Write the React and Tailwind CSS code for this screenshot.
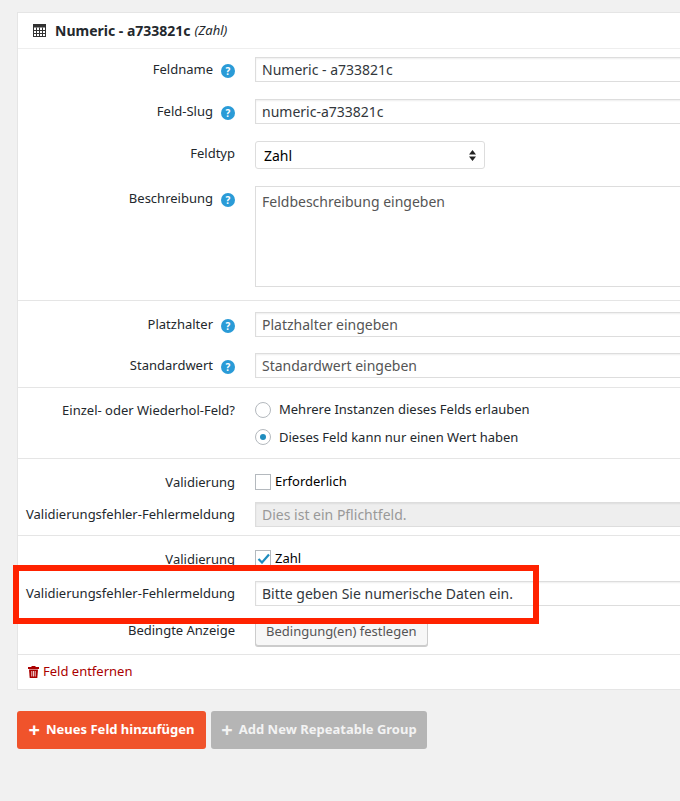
import React from "react";

const Help = () => (
  <span className="inline-flex items-center justify-center w-[14px] h-[14px] rounded-full bg-[#2a9bd7] text-white text-[10px] font-bold ml-[8px] leading-none">?</span>
);

function Row({ label, help, children, className = "" }) {
  return (
    <div className={`flex ${className}`}>
      <div className="w-[217px] shrink-0 text-right text-[13px] text-[#23282d] pt-[3px] flex justify-end items-start">
        <span>{label}</span>
        {help && <span className="mt-[1px]"><Help /></span>}
      </div>
      <div className="ml-[20px] flex-1">{children}</div>
    </div>
  );
}

const inputBase = "w-full h-[25px] border border-[#ddd] px-[6px] text-[14px] shadow-[inset_0_1px_2px_rgba(0,0,0,0.07)] flex items-center";
const inputCls = `${inputBase} bg-white text-[#32373c]`;

export default function App() {
  return (
    <div className="w-[680px] h-[801px] overflow-hidden bg-[#f1f1f1] pt-[12px] font-['Liberation_Sans',Arial,sans-serif]">
      <div className="ml-[17px] w-[720px] bg-white border border-[#e5e5e5]">
        <div className="h-[36px] flex items-center px-[15px] border-b border-[#eee] text-[14px] text-[#23282d]">
          <svg width="13" height="13" viewBox="0 0 13 13" className="mr-[9px]">
            <rect x="0.5" y="0.5" width="12" height="12" fill="none" stroke="#333" />
            <rect x="0.5" y="0.5" width="12" height="3" fill="#333" />
            <path d="M0.5 6.5H12.5M0.5 9.5H12.5M3.5 3.5V12.5M6.5 3.5V12.5M9.5 3.5V12.5" stroke="#333" />
          </svg>
          <span className="font-bold">Numeric - a733821c</span>
          <span className="italic ml-[4px] text-[13px]">(Zahl)</span>
        </div>

        <div className="pt-[8px] pb-[13px] flex flex-col gap-[17px] border-b border-[#e5e5e5]">
          <Row label="Feldname" help><div className={inputCls}>Numeric - a733821c</div></Row>
          <Row label="Feld-Slug" help><div className={inputCls}>numeric-a733821c</div></Row>
          <Row label="Feldtyp">
            <div className="w-[230px] h-[28px] border border-[#ddd] rounded-[3px] bg-white px-[8px] text-[14px] flex items-center justify-between">
              <span>Zahl</span>
              <svg width="7" height="11" viewBox="0 0 7 11"><path d="M0 4.5L3.5 0L7 4.5ZM0 6.5L3.5 11L7 6.5Z" fill="#222" /></svg>
            </div>
          </Row>
          <Row label="Beschreibung" help>
            <div className="w-full h-[101px] border border-[#ddd] px-[6px] pt-[4px] text-[14px] text-[#555]">Feldbeschreibung eingeben</div>
          </Row>
        </div>

        <div className="pt-[11px] pb-[9px] flex flex-col gap-[16px] border-b border-[#e5e5e5]">
          <Row label="Platzhalter" help><div className={`${inputBase} bg-white text-[#555]`}>Platzhalter eingeben</div></Row>
          <Row label="Standardwert" help><div className={`${inputBase} bg-white text-[#555]`}>Standardwert eingeben</div></Row>
        </div>

        <div className="pt-[10px] pb-[11px] border-b border-[#e5e5e5]">
          <Row label="Einzel- oder Wiederhol-Feld?">
            <div className="flex flex-col gap-[8px] text-[13px] text-[#23282d] pt-[2px]">
              <div className="flex items-center gap-[8px]"><span className="w-[16px] h-[16px] rounded-full border border-[#b4b9be] bg-white" />Mehrere Instanzen dieses Felds erlauben</div>
              <div className="flex items-center gap-[8px]"><span className="w-[16px] h-[16px] rounded-full border border-[#b4b9be] bg-white flex items-center justify-center"><span className="w-[6px] h-[6px] rounded-full bg-[#1e8cbe]" /></span>Dieses Feld kann nur einen Wert haben</div>
            </div>
          </Row>
        </div>

        <div className="pt-[11px] pb-[8px] flex flex-col gap-[9px] border-b border-[#e5e5e5]">
          <Row label="Validierung">
            <div className="flex items-center gap-[4px] text-[13px] pt-[2px]"><span className="w-[16px] h-[16px] border border-[#b4b9be]" />Erforderlich</div>
          </Row>
          <Row label="Validierungsfehler-Fehlermeldung">
            <div className={`${inputBase} bg-[#eeeeee] text-[#999]`}>Dies ist ein Pflichtfeld.</div>
          </Row>
        </div>

        <div className="pt-[11px] pb-[8px] flex flex-col gap-[12px] border-b border-[#e5e5e5]">
          <Row label="Validierung">
            <div className="flex items-center gap-[4px] text-[13px] pt-[2px]">
              <span className="w-[16px] h-[16px] border border-[#b4b9be] flex items-center justify-center">
                <svg width="13" height="11" viewBox="0 0 13 11"><path d="M1.5 6L5 9.5L12 1.5" fill="none" stroke="#1e8cbe" strokeWidth="2.2" /></svg>
              </span>Zahl
            </div>
          </Row>
          <div className="relative">
            <Row label="Validierungsfehler-Fehlermeldung">
              <div className={inputCls}>Bitte geben Sie numerische Daten ein.</div>
            </Row>
            <div className="absolute left-[-5px] top-[-16px] w-[526px] h-[59px] border-[6px] border-[#ff2200] pointer-events-none" />
          </div>
          <Row label="Bedingte Anzeige">
            <div className="inline-flex h-[28px] items-center px-[10px] border border-[#ccc] rounded-[3px] bg-[#f7f7f7] text-[13px] text-[#555] shadow-[0_1px_0_#ccc]">Bedingung(en) festlegen</div>
          </Row>
        </div>

        <div className="h-[34px] flex items-center px-[10px] text-[13px] text-[#a00]">
          <svg width="11" height="12" viewBox="0 0 11 12" className="mr-[4px]">
            <rect x="0" y="1" width="11" height="2" fill="#a00" />
            <rect x="3.5" y="0" width="4" height="1.5" fill="#a00" />
            <path d="M1 3.5H10L9.3 12H1.7Z" fill="#a00" />
            <path d="M3.8 5V10.5M5.5 5V10.5M7.2 5V10.5" stroke="#fff" strokeWidth="0.8" />
          </svg>
          Feld entfernen
        </div>
      </div>

      <div className="flex gap-[5px] ml-[17px] mt-[21px]">
        <div className="h-[38px] w-[189px] rounded-[3px] bg-[#f0532b] text-white font-bold text-[13px] flex items-center justify-center gap-[6px]">
          <span className="text-[20px] leading-none font-bold">+</span>Neues Feld hinzufügen
        </div>
        <div className="h-[38px] w-[216px] rounded-[3px] bg-[#b5b5b5] text-[#f3f3f3] font-bold text-[13px] flex items-center justify-center gap-[6px]">
          <span className="text-[20px] leading-none font-bold">+</span>Add New Repeatable Group
        </div>
      </div>
    </div>
  );
}
